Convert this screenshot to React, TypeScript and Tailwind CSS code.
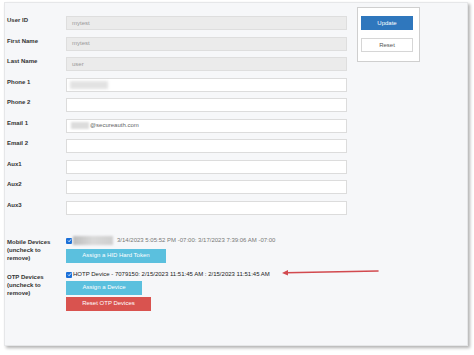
import React from "react";

const font = { fontFamily: '"Liberation Sans", Arial, sans-serif' };

function Row({ label, children, disabled }: { label: string; children?: React.ReactNode; disabled?: boolean }) {
  return (
    <div className="flex items-start h-[14px]">
      <div className="w-[59px] text-[6px] leading-[8px] font-bold text-[#333]">{label}</div>
      <div
        className={
          "w-[281px] h-[14px] border flex items-center pl-[5px] text-[6px] " +
          (disabled ? "bg-[#ebebeb] border-[#dedede] text-[#999]" : "bg-white border-[#dcdcdc] text-[#666]")
        }
      >
        {children}
      </div>
    </div>
  );
}

function Check() {
  return (
    <span className="w-[6px] h-[6px] bg-[#1a6fd8] rounded-[1px] flex items-center justify-center shrink-0">
      <svg width="5" height="5" viewBox="0 0 10 10">
        <path d="M2 5.2 L4.2 7.4 L8.2 2.6" stroke="#fff" strokeWidth="1.8" fill="none" />
      </svg>
    </span>
  );
}

export default function App() {
  return (
    <div className="w-[474px] h-[355px] bg-white relative overflow-hidden" style={font}>
      <div className="absolute left-0 top-0 w-0 h-0" />
      <div className="ml-[4px] mt-[2px] w-[464px] h-[344px] bg-[#f6f7f9] border border-[#e6e7e9] shadow-[2px_2px_3px_rgba(0,0,0,0.3)] flex items-start pl-[2px]">
        <div className="flex flex-col pt-[13px]">
          <div className="flex flex-col gap-[6.55px]">
            <Row label="User ID" disabled>mytest</Row>
            <Row label="First Name" disabled>mytest</Row>
            <Row label="Last Name" disabled>user</Row>
            <Row label="Phone 1">
              <span className="block w-[38px] h-[8px] bg-[#e2e2e2] blur-[1.5px] -ml-[2px]" />
            </Row>
            <Row label="Phone 2" />
            <Row label="Email 1">
              <span className="block w-[18px] h-[7px] bg-[#dcdcdc] blur-[1px] -ml-[1px] mr-[1px]" />
              <span>@secureauth.com</span>
            </Row>
            <Row label="Email 2" />
            <Row label="Aux1" />
            <Row label="Aux2" />
            <Row label="Aux3" />
          </div>

          {/* Mobile devices */}
          <div className="flex items-start mt-[21px]">
            <div className="w-[59px] text-[6px] leading-[8px] font-bold text-[#333] mt-[2px]">
              Mobile Devices
              <br />
              (uncheck to
              <br />
              remove)
            </div>
            <div className="flex flex-col">
              <div className="h-[10px] flex items-center text-[6px] text-[#777] whitespace-nowrap">
                <Check />
                <span className="block w-[40px] h-[9px] ml-[1px] bg-gradient-to-r from-[#bdbdbd] via-[#d9d9d9] to-[#cfcfcf] blur-[1px]" />
                <span className="ml-[4px]">3/14/2023 5:05:52 PM -07:00: 3/17/2023 7:39:06 AM -07:00</span>
              </div>
              <div className="mt-[3px] w-[100px] h-[14px] bg-[#5bc0de] text-white text-[6px] flex items-center justify-center">
                Assign a HID Hard Token
              </div>
            </div>
          </div>

          {/* OTP devices */}
          <div className="flex items-start mt-[7px]">
            <div className="w-[59px] text-[6px] leading-[8px] font-bold text-[#333] mt-[3px]">
              OTP Devices
              <br />
              (uncheck to
              <br />
              remove)
            </div>
            <div className="flex flex-col">
              <div className="h-[10px] flex items-center text-[6px] text-[#222] whitespace-nowrap">
                <Check />
                <span className="ml-[1px]">HOTP Device - 7079150: 2/15/2023 11:51:45 AM : 2/15/2023 11:51:45 AM</span>
              </div>
              <div className="mt-[1px] w-[76px] h-[14px] bg-[#5bc0de] text-white text-[6px] flex items-center justify-center">
                Assign a Device
              </div>
              <div className="mt-[2px] w-[85px] h-[14px] bg-[#d9534f] text-white text-[6px] flex items-center justify-center">
                Reset OTP Devices
              </div>
            </div>
          </div>
        </div>

        <div className="ml-[10px] mt-[4px] w-[63px] h-[55px] bg-white border border-[#cfcfcf] flex flex-col gap-[8px] pl-[3px] pt-[8px]">
          <div className="w-[52px] h-[14px] bg-[#2f77bd] text-white text-[6px] flex items-center justify-center">Update</div>
          <div className="w-[52px] h-[14px] bg-white border border-[#d6d6d6] text-[#555] text-[6px] flex items-center justify-center">Reset</div>
        </div>
      </div>

      {/* annotation arrow */}
      <svg className="absolute left-[280px] top-[266px]" width="102" height="12" viewBox="0 0 102 12">
        <line x1="6" y1="6.8" x2="98" y2="5" stroke="#d24a4f" strokeWidth="1.6" strokeLinecap="round" />
        <polygon points="2,6.9 8,4 8,9.6" fill="#d24a4f" />
      </svg>
    </div>
  );
}
